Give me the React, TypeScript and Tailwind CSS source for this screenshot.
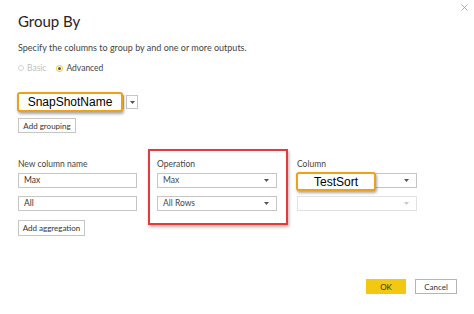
import React from 'react';

const Caret: React.FC<{ muted?: boolean }> = ({ muted }) => (
  <svg width="5" height="3" viewBox="0 0 5 3" className="shrink-0">
    <path d="M0 0 L5 0 L2.5 3 Z" fill={muted ? '#c8c8c8' : '#555'} />
  </svg>
);

const Select: React.FC<{ value?: string; disabled?: boolean }> = ({ value, disabled }) => (
  <div
    className={`flex items-center justify-between w-[120px] h-[15px] pl-[5px] pr-[7px] border bg-white text-[8.5px] ${
      disabled ? 'border-[#e1e1e1] text-[#aaa]' : 'border-[#c6c6c6] text-[#444]'
    }`}
  >
    <span>{value}</span>
    <Caret muted={disabled} />
  </div>
);

const TextInput: React.FC<{ value: string }> = ({ value }) => (
  <div className="flex items-center w-[119px] h-[15px] pl-[5px] border border-[#c6c6c6] text-[8.5px] text-[#333]">
    {value}
  </div>
);

const Highlight: React.FC<{ text: string; className: string }> = ({ text, className }) => (
  <div
    className={`absolute flex items-center justify-center border-2 border-[#eba21a] rounded-[3px] bg-white shadow-[1px_2px_3px_rgba(0,0,0,0.35)] text-[12px] text-black font-['Liberation_Sans',Arial,sans-serif] ${className}`}
  >
    {text}
  </div>
);

const App: React.FC = () => {
  return (
    <div className="relative flex flex-col w-[474px] h-[314px] bg-white font-['Lato','Open_Sans',sans-serif] text-[#444] pl-[18px] pt-[11px]">
      <svg width="7" height="7" viewBox="0 0 7 7" className="absolute top-[4px] right-[6px]">
        <path d="M0.5 0.5 L6.5 6.5 M6.5 0.5 L0.5 6.5" stroke="#9a9a9a" strokeWidth="0.8" />
      </svg>

      <h1 className="text-[15px] leading-[20px] text-[#252423]">Group By</h1>
      <p className="mt-[11px] text-[9px] leading-[12px] text-[#444]">
        Specify the columns to group by and one or more outputs.
      </p>

      <div className="flex items-center mt-[9px] text-[8.5px] leading-[10px]">
        <span className="w-[6px] h-[6px] rounded-full border border-[#d4d4d4]" />
        <span className="ml-[3px] text-[#c0c0c0]">Basic</span>
        <span className="ml-[10px] flex items-center justify-center w-[7px] h-[7px] rounded-full border border-[#f2c811]">
          <span className="w-[3px] h-[3px] rounded-full bg-[#555]" />
        </span>
        <span className="ml-[3px] text-[#444]">Advanced</span>
      </div>

      <div className="relative mt-[22px] flex items-center h-[14px]">
        <div className="w-[106px] h-[14px] border border-[#c6c6c6]" />
        <div className="ml-[2px] flex items-center justify-center w-[12px] h-[14px] border border-[#c6c6c6]">
          <Caret />
        </div>
        <Highlight text="SnapShotName" className="left-[-1px] top-[-3px] w-[106px] h-[20px]" />
      </div>

      <button className="mt-[9px] self-start w-[58px] h-[15px] border border-[#c6c6c6] text-[8px] leading-none text-[#333]">
        Add grouping
      </button>

      <div className="mt-[16px] flex items-start">
        <div className="pt-[9px] w-[119px]">
          <div className="text-[8.5px] leading-[12px]">New column name</div>
          <div className="mt-[3px] flex flex-col gap-[8px]">
            <TextInput value="Max" />
            <TextInput value="All" />
          </div>
          <button className="mt-[9px] w-[67px] h-[16px] border border-[#c6c6c6] text-[8px] leading-none text-[#333]">
            Add aggregation
          </button>
        </div>

        <div className="ml-[11px] w-[140px] h-[76px] border-2 border-[#e23b3e] pt-[7px] pl-[7px] shadow-[1px_2px_3px_rgba(0,0,0,0.3)]">
          <div className="text-[8.5px] leading-[12px]">Operation</div>
          <div className="mt-[3px] flex flex-col gap-[8px]">
            <Select value="Max" />
            <Select value="All Rows" />
          </div>
        </div>

        <div className="ml-[9px] pt-[9px]">
          <div className="text-[8.5px] leading-[12px]">Column</div>
          <div className="relative mt-[3px] flex flex-col gap-[8px]">
            <Select />
            <Select disabled />
            <Highlight text="TestSort" className="left-[-1px] top-[-1px] w-[80px] h-[19px]" />
          </div>
        </div>
      </div>

      <div className="mt-auto mb-[20px] mr-[17px] flex justify-end gap-[9px]">
        <button className="w-[40px] h-[15px] bg-[#f2c811] text-[8px] leading-none text-[#333]">OK</button>
        <button className="w-[42px] h-[15px] border border-[#b5b5b5] bg-white text-[8px] leading-none text-[#333]">
          Cancel
        </button>
      </div>
    </div>
  );
};

export default App;
